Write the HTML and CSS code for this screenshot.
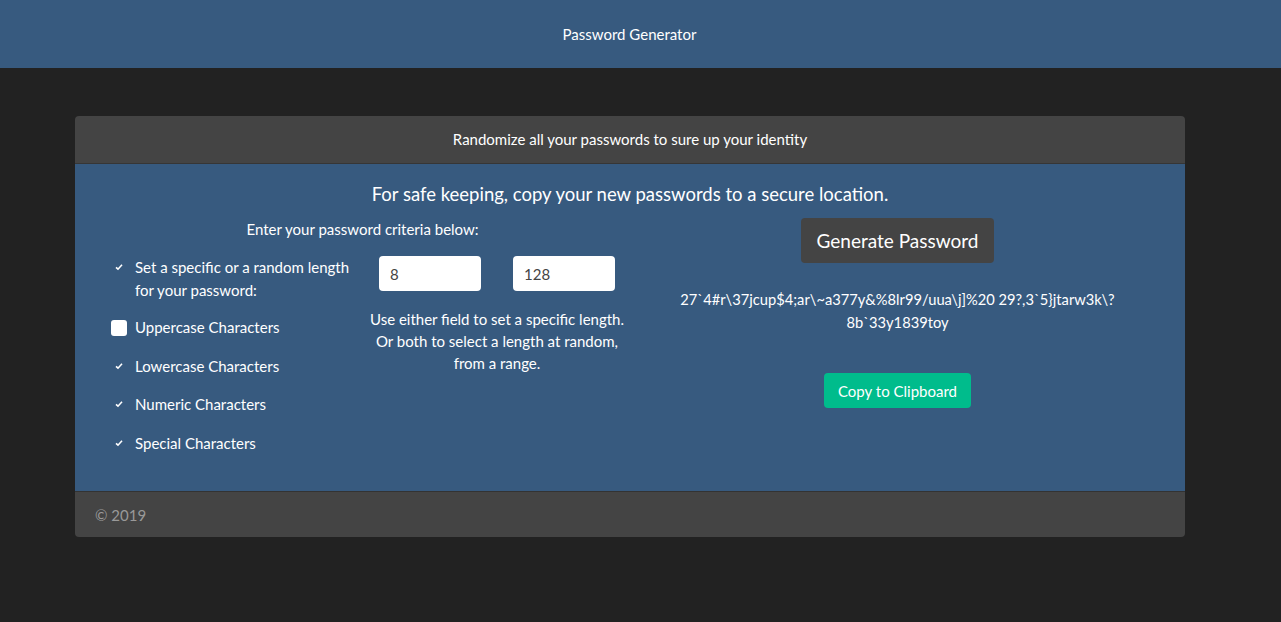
FILE: index.html
```html
<!DOCTYPE html>
<html lang="en">
<head>
<meta charset="utf-8">
<title>Password Generator</title>
<link rel="stylesheet" href="styles.css">
</head>
<body>
<nav class="navbar">Password Generator</nav>
<main class="container">
  <section class="card">
    <header class="card-header">Randomize all your passwords to sure up your identity</header>
    <div class="card-body">
      <h5 class="title">For safe keeping, copy your new passwords to a secure location.</h5>
      <div class="row">
        <div class="col left">
          <p class="criteria">Enter your password criteria below:</p>
          <div class="sub-row">
            <ul class="checks">
              <li class="check-item tall"><span class="mark on"><svg viewBox="0 0 8 8" width="8" height="8"><path d="M1 4.3 L3 6.2 L7 1.8" fill="none" stroke="#fff" stroke-width="1.6"/></svg></span><span>Set a specific or a random length for your password:</span></li>
              <li class="check-item"><span class="mark off"></span><span>Uppercase Characters</span></li>
              <li class="check-item"><span class="mark on"><svg viewBox="0 0 8 8" width="8" height="8"><path d="M1 4.3 L3 6.2 L7 1.8" fill="none" stroke="#fff" stroke-width="1.6"/></svg></span><span>Lowercase Characters</span></li>
              <li class="check-item"><span class="mark on"><svg viewBox="0 0 8 8" width="8" height="8"><path d="M1 4.3 L3 6.2 L7 1.8" fill="none" stroke="#fff" stroke-width="1.6"/></svg></span><span>Numeric Characters</span></li>
              <li class="check-item"><span class="mark on"><svg viewBox="0 0 8 8" width="8" height="8"><path d="M1 4.3 L3 6.2 L7 1.8" fill="none" stroke="#fff" stroke-width="1.6"/></svg></span><span>Special Characters</span></li>
            </ul>
            <div class="lengths">
              <div class="inputs">
                <input class="field" type="text" value="8">
                <input class="field" type="text" value="128">
              </div>
              <p class="hint">Use either field to set a specific length. Or both to select a length at random, from a range.</p>
            </div>
          </div>
        </div>
        <div class="col right">
          <button class="btn btn-gen">Generate Password</button>
          <p class="password">27`4#r\37jcup$4;ar\~a377y&amp;%8lr99/uua\j]%20 29?,3`5}jtarw3k\?<br>8b`33y1839toy</p>
          <button class="btn btn-copy">Copy to Clipboard</button>
        </div>
      </div>
    </div>
    <footer class="card-footer">© 2019</footer>
  </section>
</main>
</body>
</html>
```
FILE: styles.css
```css
* { box-sizing: border-box; }
html, body { margin: 0; padding: 0; }
body {
  background: #222;
  color: #fff;
  font-family: Lato, "Open Sans", "Liberation Sans", sans-serif;
  font-size: 15px;
  line-height: 1.5;
}
.navbar {
  background: #375a7f;
  height: 68px;
  display: flex;
  align-items: center;
  justify-content: center;
  font-size: 15px;
  padding-right: 22px;
}
.container {
  width: 1110px;
  margin: 48px 0 0 75px;
}
.card {
  border-radius: 4px;
  overflow: hidden;
}
.card-header {
  background: #444;
  text-align: center;
  padding: 12px 20px 13px;
  border-bottom: 1px solid rgba(0,0,0,0.2);
  line-height: 22px;
}
.card-body {
  background: #375a7f;
  padding: 18px 20px 21px;
}
.title {
  margin: 0 0 11px;
  font-size: 18.5px;
  font-weight: 400;
  text-align: center;
  line-height: 24px;
}
.row { display: flex; }
.col { flex: 1 1 0; }
.criteria {
  margin: 0;
  text-align: center;
  line-height: 22px;
  padding-top: 1px;
}
.sub-row {
  display: flex;
  margin-top: 16px;
}
.checks {
  list-style: none;
  margin: 0;
  padding: 0 0 0 16px;
  width: 267px;
}
.check-item {
  display: flex;
  align-items: flex-start;
  line-height: 23px;
  margin-bottom: 15.6px;
}
.check-item.tall { margin-bottom: 14px; }
.mark {
  width: 24px;
  flex: none;
  height: 23px;
  display: flex;
  align-items: center;
}
.mark.on svg { margin-left: 4px; margin-top: -1px; }
.mark.off::before {
  content: "";
  display: block;
  width: 16px;
  height: 16px;
  background: #fff;
  border-radius: 3px;
}
.check-item span:last-child { width: 230px; }
.lengths {
  width: 268px;
  padding-left: 17px;
}
.inputs {
  display: flex;
  gap: 32px;
}
.field {
  width: 102px;
  height: 35px;
  border: 0;
  border-radius: 4px;
  background: #fff;
  color: #444;
  font: inherit;
  padding: 0 11px;
}
.hint {
  margin: 17px 0 0 -14px;
  width: 264px;
  text-align: center;
  line-height: 22px;
}
.right {
  display: flex;
  flex-direction: column;
  align-items: center;
}
.btn {
  border: 0;
  color: #fff;
  font-family: inherit;
  border-radius: 4px;
  cursor: pointer;
}
.btn-gen {
  background: #444;
  font-size: 19px;
  height: 45px;
  padding: 0 16px;
  margin-top: 1px;
}
.password {
  margin: 25px 0 0;
  text-align: center;
  line-height: 23px;
  font-size: 14.7px;
}
.btn-copy {
  background: #00bc8c;
  font-size: 15px;
  height: 35px;
  padding: 0 14px;
  margin-top: 39px;
}
.card-footer {
  background: #444;
  color: #999;
  padding: 12px 20px 11px;
  line-height: 22px;
  border-top: 1px solid rgba(0,0,0,0.25);
}
```
